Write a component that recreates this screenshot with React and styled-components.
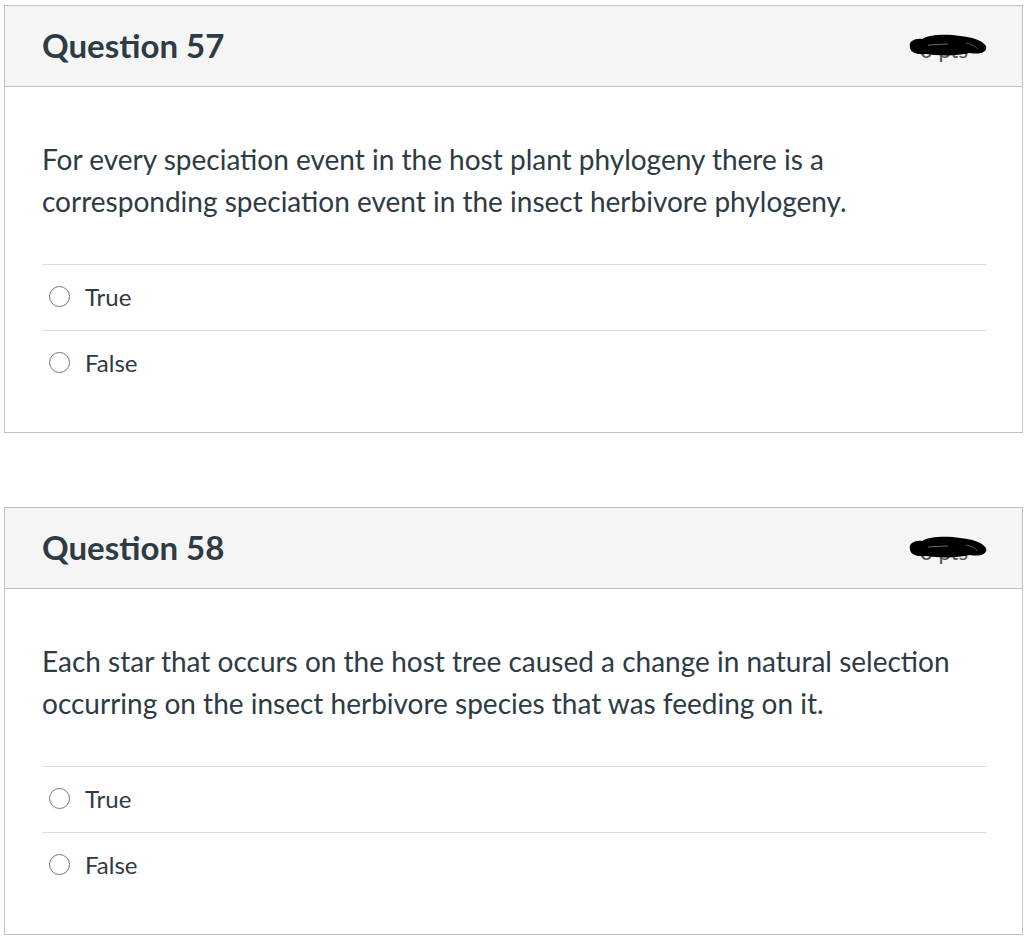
import styled, { createGlobalStyle } from "styled-components";

const GlobalStyle = createGlobalStyle`
  body {
    margin: 0;
    background: #ffffff;
    font-family: Lato, "Open Sans", sans-serif;
    color: #2d3b45;
  }
`;

const Page = styled.div`
  display: flex;
  flex-direction: column;
  gap: 74px;
  padding: 5px 1px 0 4px;
`;

const Card = styled.section`
  border: 1px solid #c2c2c2;
  background: #ffffff;
`;

const Header = styled.header`
  display: flex;
  align-items: center;
  justify-content: space-between;
  box-sizing: border-box;
  height: 81px;
  padding: 0 34px 0 37px;
  background: #f5f5f5;
  border-bottom: 1px solid #c2c2c2;
`;

const Title = styled.h2`
  margin: 0;
  font-size: 33px;
  font-weight: 700;
  color: #2d3b45;
  padding-bottom: 2px;
`;

const Body = styled.div`
  padding: 51px 35px 36px 37px;
`;

const Text = styled.p`
  margin: 0 0 42px;
  font-size: 28px;
  line-height: 42px;
  color: #2d3b45;
`;

const Answer = styled.label`
  display: flex;
  align-items: center;
  gap: 15px;
  box-sizing: border-box;
  height: 66px;
  padding-left: 7px;
  padding-bottom: 2px;
  border-top: 1px solid #dedede;
  font-size: 24px;
  color: #2d3b45;
`;

const Radio = styled.span`
  box-sizing: border-box;
  width: 21px;
  height: 21px;
  border: 1.5px solid #767676;
  border-radius: 50%;
  flex-shrink: 0;
`;

const Points = styled.div`
  position: relative;
  width: 80px;
  height: 32px;
`;

const PtsText = styled.span`
  position: absolute;
  left: 12px;
  top: 6px;
  font-size: 22px;
  color: #555;
`;

const Scribble = styled.svg`
  position: absolute;
  left: 0;
  top: 0;
`;

function Redacted() {
  return (
    <Points>
      <PtsText>0 pts</PtsText>
      <Scribble width="80" height="32" viewBox="0 0 80 32">
        <path
          d="M2 17 C0 11 8 8 14 9 C22 4 40 4 52 6 C64 7 74 10 78 16 C80 22 72 25 62 23 C50 26 30 26 18 24 C8 25 2 22 2 17 Z"
          fill="#000"
        />
        <path d="M20 15 L40 14" stroke="#666" strokeWidth="1" />
        <path d="M58 13 C64 14 68 17 70 19" stroke="#555" strokeWidth="1" fill="none" />
      </Scribble>
    </Points>
  );
}

function Question({ number, text }) {
  return (
    <Card>
      <Header>
        <Title>Question {number}</Title>
        <Redacted />
      </Header>
      <Body>
        <Text>{text}</Text>
        <Answer>
          <Radio />
          True
        </Answer>
        <Answer>
          <Radio />
          False
        </Answer>
      </Body>
    </Card>
  );
}

export default function App() {
  return (
    <>
      <GlobalStyle />
      <Page>
        <Question
          number={57}
          text="For every speciation event in the host plant phylogeny there is a corresponding speciation event in the insect herbivore phylogeny."
        />
        <Question
          number={58}
          text="Each star that occurs on the host tree caused a change in natural selection occurring on the insect herbivore species that was feeding on it."
        />
      </Page>
    </>
  );
}
